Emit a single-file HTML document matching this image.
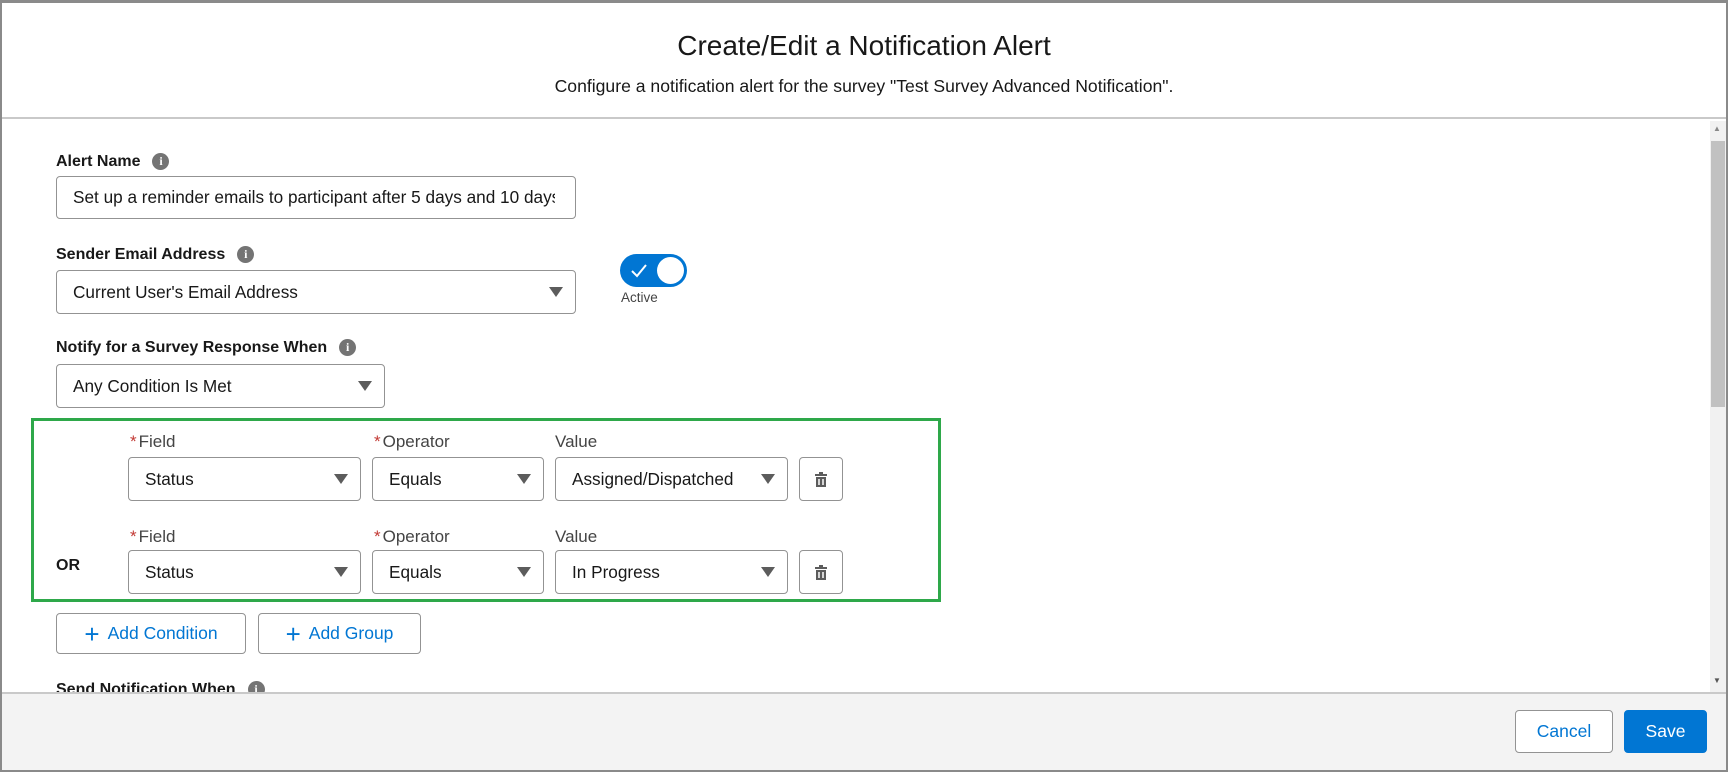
<!DOCTYPE html>
<html><head><meta charset="utf-8"><style>
*{box-sizing:border-box;margin:0;padding:0}
body{width:1728px;height:772px;overflow:hidden;background:#fff;font-family:"Liberation Sans",sans-serif;color:#181818;position:relative}
.frame{position:absolute;inset:0;border:2px solid #8a8a8a;border-top-width:3px}
.abs{position:absolute}
.hdr{left:2px;right:2px;top:3px;height:116px;border-bottom:2px solid #c9c9c9;background:#fff}
h1{position:absolute;left:0;right:0;top:27px;text-align:center;font-weight:400;font-size:28px;color:#181818}
.sub{position:absolute;left:0;right:0;top:73px;text-align:center;font-size:17.6px}
.lbl{font-size:16px;font-weight:700}
.info{display:inline-block;width:17px;height:17px;border-radius:50%;background:#747474;color:#fff;font-size:12px;font-weight:700;text-align:center;line-height:17px;vertical-align:1px;margin-left:12px;font-family:"Liberation Serif",serif}
.in{border:1px solid #939393;border-radius:4px;background:#fff;font-size:17.2px;padding-left:16px;display:flex;align-items:center;white-space:nowrap;overflow:hidden}
.in .ar{position:absolute;right:12px;top:50%;margin-top:-5px;width:0;height:0;border-left:7px solid transparent;border-right:7px solid transparent;border-top:10px solid #5c5c5c}
.sl{font-size:17px;color:#444}
.sl b{color:#c23934;font-weight:400;margin-right:2px}
.btn{border:1px solid #939393;border-radius:4px;background:#fff;display:flex;align-items:center;justify-content:center;font-size:17.5px;color:#0176d3}
.foot{left:2px;right:2px;top:692px;bottom:2px;background:#f3f3f3;border-top:2px solid #c9c9c9}
</style></head><body>
<div class="abs hdr"><h1>Create/Edit a Notification Alert</h1><div class="sub">Configure a notification alert for the survey "Test Survey Advanced Notification".</div></div>

<div class="abs lbl" style="left:56px;top:153px">Alert Name<span class="info">i</span></div>
<div class="abs in" style="left:56px;top:176px;width:520px;height:43px;padding-right:20px"><span style="overflow:hidden;display:block;width:482px">Set up a reminder emails to participant after 5 days and 10 days</span></div>

<div class="abs lbl" style="left:56px;top:246px">Sender Email Address<span class="info">i</span></div>
<div class="abs in" style="left:56px;top:270px;width:520px;height:44px">Current User's Email Address<span class="ar"></span></div>

<div class="abs" style="left:620px;top:254px;width:67px;height:33px;border-radius:17px;background:#0176d3">
<svg class="abs" style="left:10px;top:9px" width="18" height="15" viewBox="0 0 18 15"><path d="M2 8l5 5L16 2" fill="none" stroke="#fff" stroke-width="2"/></svg>
<div class="abs" style="right:3px;top:3px;width:27px;height:27px;border-radius:50%;background:#fff"></div></div>
<div class="abs" style="left:621px;top:290px;font-size:13.5px;color:#444">Active</div>

<div class="abs lbl" style="left:56px;top:339px">Notify for a Survey Response When<span class="info">i</span></div>
<div class="abs in" style="left:56px;top:364px;width:329px;height:44px">Any Condition Is Met<span class="ar"></span></div>

<div class="abs" style="left:31px;top:418px;width:910px;height:184px;border:3px solid #2ea84a"></div>

<div class="abs sl" style="left:130px;top:432px"><b>*</b>Field</div>
<div class="abs sl" style="left:374px;top:432px"><b>*</b>Operator</div>
<div class="abs sl" style="left:555px;top:432px">Value</div>
<div class="abs in" style="left:128px;top:457px;width:233px;height:44px">Status<span class="ar"></span></div>
<div class="abs in" style="left:372px;top:457px;width:172px;height:44px">Equals<span class="ar"></span></div>
<div class="abs in" style="left:555px;top:457px;width:233px;height:44px">Assigned/Dispatched<span class="ar"></span></div>
<div class="abs btn" style="left:799px;top:457px;width:44px;height:44px"><svg width="14" height="17" viewBox="0 0 14 17"><path d="M5 1h4v2h4v2H1V3h4z M2 6h10v10H2z" fill="#5c5c5c"/><path d="M5 8v6M9 8v6" stroke="#fff" stroke-width="1.5"/></svg></div>

<div class="abs sl" style="left:130px;top:527px"><b>*</b>Field</div>
<div class="abs sl" style="left:374px;top:527px"><b>*</b>Operator</div>
<div class="abs sl" style="left:555px;top:527px">Value</div>
<div class="abs lbl" style="left:56px;top:557px">OR</div>
<div class="abs in" style="left:128px;top:550px;width:233px;height:44px">Status<span class="ar"></span></div>
<div class="abs in" style="left:372px;top:550px;width:172px;height:44px">Equals<span class="ar"></span></div>
<div class="abs in" style="left:555px;top:550px;width:233px;height:44px">In Progress<span class="ar"></span></div>
<div class="abs btn" style="left:799px;top:550px;width:44px;height:44px"><svg width="14" height="17" viewBox="0 0 14 17"><path d="M5 1h4v2h4v2H1V3h4z M2 6h10v10H2z" fill="#5c5c5c"/><path d="M5 8v6M9 8v6" stroke="#fff" stroke-width="1.5"/></svg></div>

<div class="abs btn" style="left:56px;top:613px;width:190px;height:41px"><span style="font-size:26px;margin-right:8px;line-height:1">+</span>Add Condition</div>
<div class="abs btn" style="left:258px;top:613px;width:163px;height:41px"><span style="font-size:26px;margin-right:8px;line-height:1">+</span>Add Group</div>

<div class="abs lbl" style="left:56px;top:681px">Send Notification When<span class="info">i</span></div>

<div class="abs" style="left:1710px;top:121px;width:16px;height:571px;background:#f1f1f1"></div>
<div class="abs" style="left:1711px;top:141px;width:14px;height:266px;background:#c1c1c1"></div>
<div class="abs" style="left:1713px;top:124px;font-size:8px;color:#888">▲</div>
<div class="abs" style="left:1713px;top:676px;font-size:8px;color:#555">▼</div>

<div class="abs foot"></div>
<div class="abs btn" style="left:1515px;top:710px;width:98px;height:43px">Cancel</div>
<div class="abs btn" style="left:1624px;top:710px;width:83px;height:43px;background:#0176d3;border-color:#0176d3;color:#fff">Save</div>
<div class="frame"></div>
</body></html>
